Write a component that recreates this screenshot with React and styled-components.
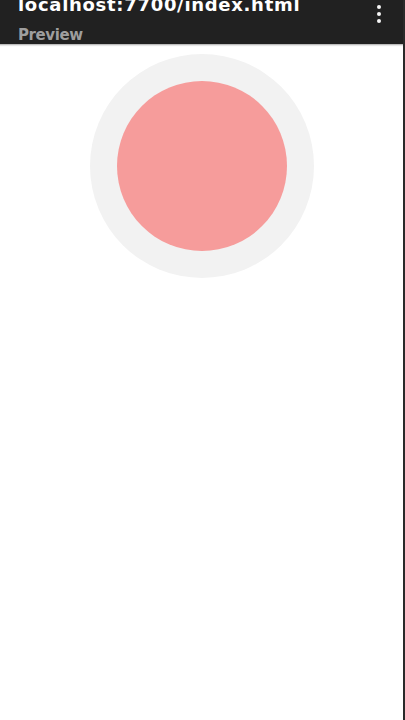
import React from "react";
import styled, { createGlobalStyle } from "styled-components";

const Global = createGlobalStyle`
  html, body { margin: 0; padding: 0; background: #ffffff; }
  body { font-family: "Comic Sans MS", "DejaVu Sans", sans-serif; }
`;

const Screen = styled.div`
  width: 405px;
  height: 720px;
  box-sizing: border-box;
  border-right: 2px solid #2a2a2a;
  display: flex;
  flex-direction: column;
  overflow: hidden;
`;

const TopBar = styled.header`
  height: 44px;
  flex: none;
  background: #212121;
  box-shadow: 0 1px 0 #bdbdbd, 0 2px 1px #e6e6e6;
  display: flex;
  align-items: flex-start;
  justify-content: space-between;
  padding: 0 0 0 18px;
  overflow: hidden;
  position: relative;
  z-index: 1;
`;

const Titles = styled.div`
  display: flex;
  flex-direction: column;
`;

const Url = styled.div`
  margin-top: -6px;
  color: #ffffff;
  font-size: 18px;
  font-weight: bold;
  line-height: 22px;
  letter-spacing: 0.7px;
  white-space: nowrap;
`;

const Sub = styled.div`
  margin-top: 10px;
  color: #9e9e9e;
  font-size: 15px;
  font-weight: bold;
  line-height: 18px;
  letter-spacing: -0.4px;
`;

const Menu = styled.div`
  width: 28px;
  margin-right: 10px;
  padding-top: 5px;
  display: flex;
  flex-direction: column;
  align-items: center;
  gap: 3px;
`;

const Dot = styled.span`
  width: 4px;
  height: 4px;
  border-radius: 50%;
  background: #f5f5f5;
`;

const Page = styled.main`
  flex: 1;
  display: flex;
  justify-content: center;
  align-items: flex-start;
  padding-top: 10px;
`;

const Ring = styled.div`
  width: 224px;
  height: 224px;
  border-radius: 50%;
  background: #f2f2f2;
  display: flex;
  align-items: center;
  justify-content: center;
`;

const Ball = styled.div`
  width: 170px;
  height: 170px;
  border-radius: 50%;
  background: #f69c9b;
`;

export default function App() {
  return (
    <>
      <Global />
      <Screen>
        <TopBar>
          <Titles>
            <Url>localhost:7700/index.html</Url>
            <Sub>Preview</Sub>
          </Titles>
          <Menu>
            <Dot />
            <Dot />
            <Dot />
          </Menu>
        </TopBar>
        <Page>
          <Ring>
            <Ball />
          </Ring>
        </Page>
      </Screen>
    </>
  );
}
